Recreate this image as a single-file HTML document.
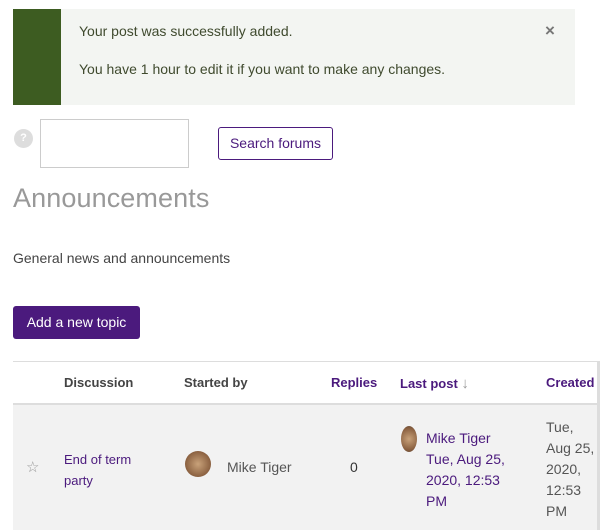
<!DOCTYPE html>
<html><head><style>
*{margin:0;padding:0;box-sizing:border-box}
body{width:600px;height:530px;overflow:hidden;background:#fff;font-family:"Liberation Sans",sans-serif;color:#333;position:relative}
.a{position:absolute;white-space:nowrap}
.p{color:#4b1a7d}
</style></head><body>
<div class="a" style="left:13px;top:9px;width:562px;height:96px;background:#f3f5f2"></div>
<div class="a" style="left:13px;top:9px;width:48px;height:96px;background:#3d5c21"></div>
<div class="a" style="left:79px;top:23px;font-size:14px;color:#3f4a2e">Your post was successfully added.</div>
<div class="a" style="left:79px;top:61px;font-size:14px;color:#3f4a2e">You have 1 hour to edit it if you want to make any changes.</div>
<div class="a" style="left:545px;top:21px;font-size:17px;color:#777;font-weight:bold">×</div>
<div class="a" style="left:14px;top:129px;width:19px;height:19px;border-radius:50%;background:#ddd;color:#fff;font-size:11px;font-weight:bold;text-align:center;line-height:19px">?</div>
<div class="a" style="left:40px;top:119px;width:149px;height:49px;border:1px solid #ccc"></div>
<div class="a" style="left:218px;top:127px;width:115px;height:33px;border:1px solid #4b1a7d;border-radius:3px;font-size:14px;line-height:31px;text-align:center;color:#4b1a7d">Search forums</div>
<div class="a" style="left:13px;top:183px;font-size:27px;font-weight:300;color:#999;letter-spacing:0.1px">Announcements</div>
<div class="a" style="left:13px;top:250px;font-size:14px;color:#444">General news and announcements</div>
<div class="a" style="left:13px;top:306px;width:127px;height:33px;background:#4b1a7d;border-radius:3px;color:#fff;font-size:14px;line-height:33px;text-align:center">Add a new topic</div>
<div class="a" style="left:13px;top:361px;width:587px;height:1px;background:#ddd"></div>
<div class="a" style="left:13px;top:403px;width:587px;height:127px;background:#f2f2f2;border-top:2px solid #ddd"></div>
<div class="a" style="left:597px;top:361px;width:3px;height:169px;background:#ddd"></div>
<div class="a" style="left:64px;top:375px;font-size:13px;font-weight:bold;color:#444">Discussion</div>
<div class="a" style="left:184px;top:375px;font-size:13px;font-weight:bold;color:#444">Started by</div>
<div class="a p" style="left:331px;top:375px;font-size:13px;font-weight:bold">Replies</div>
<div class="a p" style="left:400px;top:375px;font-size:13px;font-weight:bold">Last post <span style="color:#999;font-weight:normal;font-size:15px">↓</span></div>
<div class="a p" style="left:546px;top:375px;font-size:13px;font-weight:bold">Created</div>
<div class="a" style="left:26px;top:458px;font-size:15px;color:#999">☆</div>
<div class="a p" style="left:64px;top:449px;font-size:13px;line-height:21px">End of term<br>party</div>
<div class="a" style="left:185px;top:451px;width:26px;height:26px;border-radius:50%;background:radial-gradient(circle,#c9a27a,#8a6040 70%,#5a4030)"></div>
<div class="a" style="left:227px;top:459px;font-size:14px;color:#555">Mike Tiger</div>
<div class="a" style="left:350px;top:459px;font-size:14px">0</div>
<div class="a" style="left:401px;top:426px;width:16px;height:26px;border-radius:50%;background:radial-gradient(circle,#c9a27a,#8a6040 70%,#5a4030)"></div>
<div class="a p" style="left:426px;top:428px;font-size:14px;line-height:21px">Mike Tiger<br>Tue, Aug 25,<br>2020, 12:53<br>PM</div>
<div class="a" style="left:546px;top:417px;font-size:14px;line-height:21px;color:#555">Tue,<br>Aug 25,<br>2020,<br>12:53<br>PM</div>
</body></html>
